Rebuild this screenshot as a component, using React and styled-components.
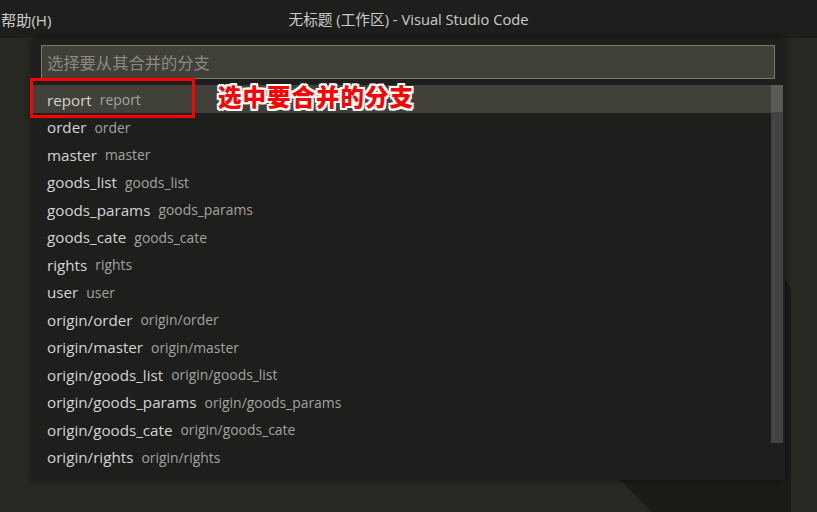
import React from 'react';
import styled, { createGlobalStyle } from 'styled-components';

const GlobalStyle = createGlobalStyle`
  html, body {
    margin: 0;
    padding: 0;
    background: #292923;
  }
  * {
    box-sizing: border-box;
  }
`;

const FONT = `"Open Sans", "Noto Sans CJK SC", sans-serif`;

const Window = styled.div`
  width: 817px;
  height: 512px;
  display: flex;
  flex-direction: column;
  overflow: hidden;
  font-family: ${FONT};
  background: #292923;
`;

const TitleBar = styled.div`
  height: 38px;
  flex-shrink: 0;
  display: grid;
  grid-template-columns: 1fr auto 1fr;
  align-items: center;
  background: #1e1e1c;
  color: #cccccc;
  font-size: 14.7px;
  padding-bottom: 1px;
`;

const MenuItem = styled.span`
  padding-left: 1px;
  font-size: 15.2px;
`;

const WindowTitle = styled.span`
  padding-left: 0;
`;

const Editor = styled.div`
  position: relative;
  flex: 1;
  padding-left: 32px;
`;

const Watermark = styled.svg`
  position: absolute;
  left: 0;
  top: 0;
`;

const QuickPick = styled.div`
  position: relative;
  width: 753px;
  height: 442px;
  background: #1e1e1c;
  box-shadow: 0 0 8px rgba(0, 0, 0, 0.55);
  padding: 7px 2px 0 1px;
`;

const InputBox = styled.div`
  margin: 0 8px 6px 8px;
  height: 34px;
  border: 1px solid #7b7b68;
  background: #41413a;
  color: #8b8b82;
  font-size: 16.3px;
  display: flex;
  align-items: center;
  padding-left: 5px;
`;

const List = styled.div`
  position: relative;
  display: flex;
  flex-direction: column;
`;

const Row = styled.div`
  height: 27.5px;
  display: flex;
  align-items: center;
  gap: 8px;
  padding: 2px 0 0 14px;
  font-size: 15.2px;
  background: ${props => (props.active ? '#41413a' : 'transparent')};
`;

const Label = styled.span`
  color: #d4d4d4;
`;

const Description = styled.span`
  color: #a3a3a0;
  font-size: 13.9px;
`;

const ScrollTrack = styled.div`
  position: absolute;
  right: 0;
  top: 0;
  width: 12px;
  height: 358px;
  background: #434341;
`;

const ScrollTop = styled.div`
  height: 27px;
  background: #5b5b55;
`;

const RedBox = styled.div`
  position: absolute;
  left: 30px;
  top: 78px;
  width: 165px;
  height: 40px;
  border: 3px solid #ff0000;
`;

const Note = styled.div`
  position: absolute;
  left: 218px;
  top: 79px;
  font-family: "Noto Sans CJK SC", sans-serif;
  font-weight: 900;
  font-size: 23.5px;
  letter-spacing: 1px;
  color: #ff0000;
  text-shadow:
    -2px -2px 0 #fff, 2px -2px 0 #fff, -2px 2px 0 #fff, 2px 2px 0 #fff,
    0 -2px 0 #fff, 0 2px 0 #fff, -2px 0 0 #fff, 2px 0 0 #fff;
`;

const branches = [
  'report',
  'order',
  'master',
  'goods_list',
  'goods_params',
  'goods_cate',
  'rights',
  'user',
  'origin/order',
  'origin/master',
  'origin/goods_list',
  'origin/goods_params',
  'origin/goods_cate',
  'origin/rights'
];

const App = () => {
  return (
    <Window>
      <GlobalStyle />
      <TitleBar>
        <MenuItem>帮助(H)</MenuItem>
        <WindowTitle>无标题 (工作区) - Visual Studio Code</WindowTitle>
        <span />
      </TitleBar>
      <Editor>
        <Watermark width="817" height="474" viewBox="0 0 817 474">
          <path d="M 560 380 L 652 474 L 791 474 L 791 256 Q 791 240 776 240 L 560 240 Z" fill="#1b1b18" />
        </Watermark>
        <QuickPick>
          <InputBox>选择要从其合并的分支</InputBox>
          <List>
            {branches.map((name, i) => (
              <Row key={name} active={i === 0}>
                <Label>{name}</Label>
                <Description>{name}</Description>
              </Row>
            ))}
            <ScrollTrack>
              <ScrollTop />
            </ScrollTrack>
          </List>
        </QuickPick>
      </Editor>
      <RedBox />
      <Note>选中要合并的分支</Note>
    </Window>
  );
};

export default App;
